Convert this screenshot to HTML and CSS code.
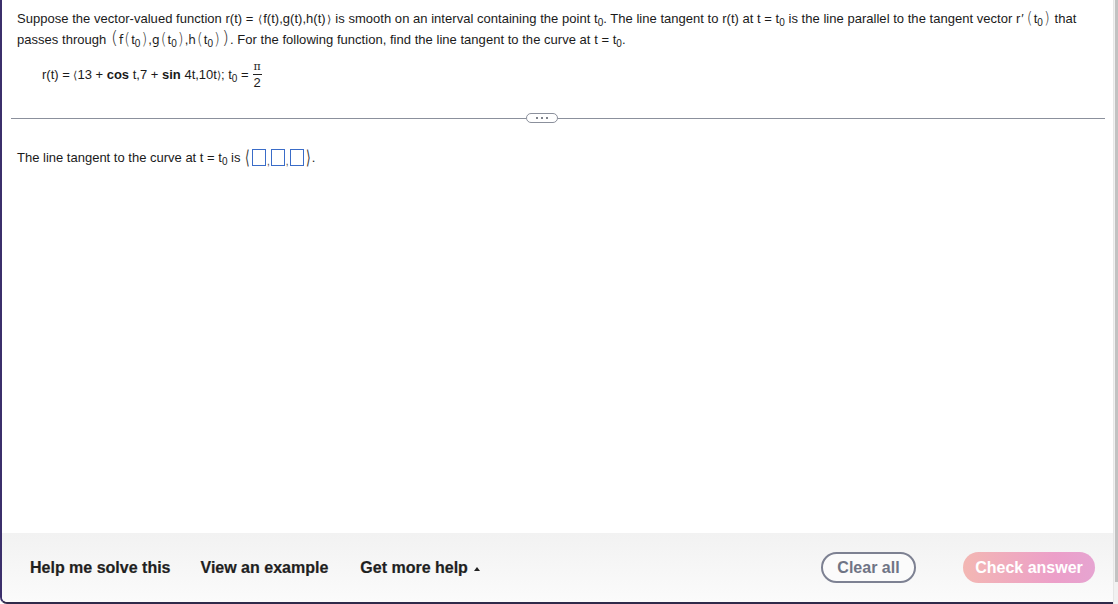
FILE: index.html
```html
<!DOCTYPE html>
<html>
<head>
<meta charset="utf-8">
<link rel="stylesheet" href="styles.css">
</head>
<body>
<div class="window">
  <div class="frame">
    <div class="content">
      <div class="question">
        <p class="line">Suppose the vector-valued function r(t) = <span class="ang">⟨</span>f(t),g(t),h(t)<span class="ang">⟩</span> is smooth on an interval containing the point t<sub>0</sub>. The line tangent to r(t) at t = t<sub>0</sub> is the line parallel to the tangent vector r<span class="prime">′</span><span class="bp">(</span>t<sub>0</sub><span class="bp">)</span> that</p>
        <p class="line">passes through <span class="bp big">(</span><span class="fn">f</span><span class="bp">(</span>t<sub>0</sub><span class="bp">)</span>,<span class="fn">g</span><span class="bp">(</span>t<sub>0</sub><span class="bp">)</span>,<span class="fn">h</span><span class="bp">(</span>t<sub>0</sub><span class="bp">)</span><span class="bp big">)</span>. For the following function, find the line tangent to the curve at t = t<sub>0</sub>.</p>
        <div class="formula">
          <span>r(t) = <span class="ang">⟨</span>13 + <b>cos</b> t,7 + <b>sin</b> 4t,10t<span class="ang">⟩</span>; t<sub>0</sub> = </span>
          <span class="frac"><span class="num">π</span><span class="den">2</span></span>
        </div>
      </div>
      <div class="divider">
        <span class="rule left"></span>
        <span class="more"><i></i><i></i><i></i></span>
        <span class="rule"></span>
      </div>
      <div class="answer">
        <span>The line tangent to the curve at t = t<sub>0</sub> is </span>
        <span class="vec"><span class="ang big">⟨</span><span class="box"></span><span class="comma">,</span><span class="box"></span><span class="comma">,</span><span class="box"></span><span class="ang big">⟩</span>.</span>
      </div>
    </div>
    <div class="footer">
      <div class="links">
        <span class="link">Help me solve this</span>
        <span class="link">View an example</span>
        <span class="link">Get more help <span class="caret"></span></span>
      </div>
      <div class="actions">
        <span class="btn clear">Clear all</span>
        <span class="btn check">Check answer</span>
      </div>
    </div>
  </div>
  <div class="scrollbar"><div class="thumb"></div></div>
</div>
</body>
</html>
```
FILE: styles.css
```css
html, body {
  margin: 0;
  padding: 0;
  background: #ffffff;
}
body {
  font-family: "Liberation Sans", Arial, sans-serif;
  color: #1a1a1a;
  font-size: 13px;
}
.window {
  display: flex;
  width: 1118px;
  height: 604px;
}
.frame {
  flex: 1;
  display: flex;
  flex-direction: column;
  border-left: 2px solid #3b2f6b;
  border-bottom: 2px solid #2f2a4a;
  border-bottom-left-radius: 7px;
  box-sizing: border-box;
  height: 604px;
  overflow: hidden;
}
.content {
  flex: 1;
  padding: 8px 0 0 15px;
}
.question .line {
  margin: 0;
  height: 21px;
  line-height: 21px;
  white-space: nowrap;
  letter-spacing: 0.03px;
}
sub {
  font-size: 10px;
  vertical-align: -3px;
  line-height: 0;
}
.ang {
  font-family: "DejaVu Sans", sans-serif;
  font-weight: 200;
  font-size: 11px;
  color: #333;
  line-height: 0;
}
.line .ang {
  margin: 0 1px;
}
.ang.big {
  display: inline-block;
  font-size: 12px;
  line-height: 12px;
  transform: scaleY(1.6);
  margin: 0 1px;
}
.bp {
  font-family: "DejaVu Sans", sans-serif;
  font-size: 15px;
  font-weight: 200;
  color: #333;
  line-height: 0;
  margin: 0 1px;
}
.bp.big {
  font-size: 18px;
  margin: 0 1px;
}
.fn {
  font-family: "DejaVu Sans", sans-serif;
  font-size: 12px;
}
.prime {
  font-size: 13px;
  margin: 0 2px 0 1px;
}
.formula {
  display: flex;
  align-items: center;
  margin: 9px 0 0 25px;
  height: 30px;
}
.frac {
  display: inline-flex;
  flex-direction: column;
  align-items: center;
  margin-left: 4px;
  line-height: 13px;
}
.frac .num {
  font-family: "DejaVu Serif", serif;
  font-size: 11px;
  padding: 0 1px 1px;
  border-bottom: 1px solid #222;
}
.frac .den {
  font-size: 13px;
  padding-top: 1px;
}
.divider {
  display: flex;
  align-items: center;
  margin: 24px 0 0 -6px;
  width: 1094px;
}
.rule {
  flex: 1;
  height: 1px;
  background: #8b909c;
}
.rule.left {
  flex: 0 0 515px;
}
.more {
  display: inline-flex;
  align-items: center;
  justify-content: center;
  gap: 3px;
  width: 30px;
  height: 8px;
  border: 1px solid #8b909c;
  border-radius: 5px;
  background: #fff;
}
.more i {
  width: 2px;
  height: 2px;
  background: #555a66;
  border-radius: 1px;
}
.answer {
  display: flex;
  align-items: center;
  margin-top: 25px;
  white-space: pre;
}
.vec {
  display: inline-flex;
  align-items: center;
}
.box {
  display: inline-block;
  width: 14px;
  height: 17px;
  border: 1px solid #3a6cc8;
  box-sizing: border-box;
  margin: 0 1px;
}
.comma {
  font-size: 10px;
  margin-top: 8px;
  color: #444;
}
.footer {
  height: 69px;
  background: linear-gradient(#f2f2f2, #fbfbfb);
  display: flex;
  align-items: center;
  justify-content: space-between;
  padding: 0 18px 0 28px;
  flex-shrink: 0;
}
.links {
  display: flex;
  gap: 30px;
}
.link {
  font-size: 16px;
  font-weight: 600;
  color: #1f1f1f;
  font-family: "Liberation Sans", Arial, sans-serif;
  display: inline-flex;
  align-items: center;
  -webkit-text-stroke: 0.2px #1f1f1f;
}
.link + .link + .link {
  margin-left: 2px;
}
.caret {
  display: inline-block;
  width: 0;
  height: 0;
  border-left: 3px solid transparent;
  border-right: 3px solid transparent;
  border-bottom: 4px solid #222;
  margin-left: 6px;
  margin-top: 2px;
}
.actions {
  display: flex;
  gap: 47px;
}
.btn {
  display: inline-flex;
  align-items: center;
  justify-content: center;
  height: 31px;
  border-radius: 16px;
  font-size: 16px;
  font-weight: bold;
  box-sizing: border-box;
}
.clear {
  width: 95px;
  border: 2px solid #7d8192;
  color: #6f7485;
  background: #fbfbfb;
}
.check {
  width: 132px;
  color: #ffffff;
  background: linear-gradient(90deg, #f3b7b3, #ec9fc9 70%, #e6a4d1);
}
.scrollbar {
  width: 5px;
  height: 604px;
  background: #f1f1f1;
  border-left: 1px solid #e6e6e6;
  box-sizing: border-box;
}
.thumb {
  margin-left: 1px;
  width: 3px;
  height: 582px;
  background: #c2c2c2;
}
```
